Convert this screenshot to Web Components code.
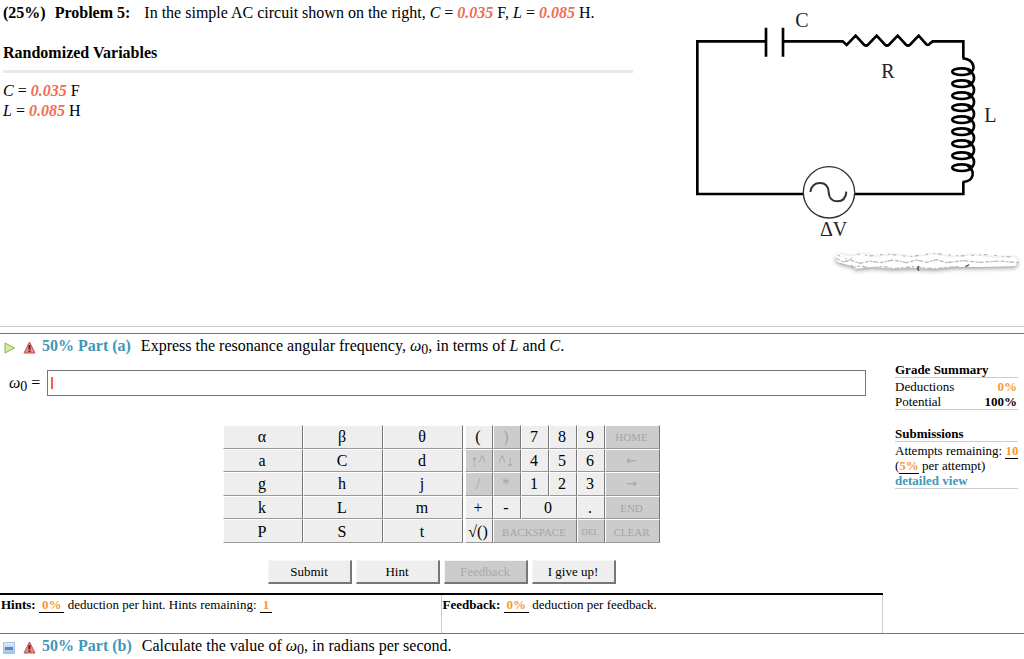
<!DOCTYPE html>
<html lang="en">
<head>
<meta charset="utf-8">
<title>Problem 5</title>
<style>
  body {
    margin: 0;
    background: #fff;
    color: #000;
    font: 16px/20px "Liberation Serif", "Times New Roman", serif;
    --link: #4197b8;
    --accent: #f79a32;
    --random: #f26b52;
    --rule: #ccc;
    --dark-rule: #777;
  }
  .value { color: var(--random); font-weight: 700; font-style: italic; }
  .question {
    display: grid;
    grid-template-columns: minmax(0, 1fr) 123px;
    column-gap: 12px;
    padding-right: 6px;
  }
  grade-summary { margin-top: 4px; }
</style>
</head>
<body>
<problem-statement>
  <span slot="weight">(25%)</span>
  <span slot="title">Problem 5:</span>
  <span slot="text">In the simple AC circuit shown on the right, <i>C</i> = <span class="value">0.035</span> F, <i>L</i> = <span class="value">0.085</span> H.</span>
  <div slot="variables"><i>C</i> = <span class="value">0.035</span> F</div>
  <div slot="variables"><i>L</i> = <span class="value">0.085</span> H</div>
  <circuit-diagram slot="figure"></circuit-diagram>
</problem-statement>

<part-heading state="open">
  <span slot="label">50% Part (a)</span>
  Express the resonance angular frequency, <omega-zero></omega-zero>, in terms of <i>L</i> and <i>C</i>.
</part-heading>

<div class="question">
  <answer-panel></answer-panel>
  <grade-summary></grade-summary>
</div>

<deduction-panel></deduction-panel>

<part-heading state="closed">
  <span slot="label">50% Part (b)</span>
  Calculate the value of <omega-zero></omega-zero>, in radians per second.
</part-heading>

<script>
class ProblemStatement extends HTMLElement {
  connectedCallback() {
    if (this.shadowRoot) return;
    this.attachShadow({ mode: "open" }).innerHTML = `
      <style>
        :host {
          display: grid;
          grid-template-columns: minmax(0, 1fr) 344px;
          padding-bottom: 46px;
          border-bottom: 1px solid var(--rule);
        }
        .text { padding: 3px 47px 0 3px; }
        p { margin: 0; white-space: nowrap; }
        b { margin-right: 5px; }
        b + b { margin-right: 10px; }
        h2 {
          margin: 20px 0 7px;
          font-size: 16px;
          line-height: 20px;
        }
        hr { height: 3px; margin: 0 0 8px; border: 0; background: #e8e8e8; }
      </style>
      <div class="text">
        <p><b><slot name="weight"></slot></b> <b><slot name="title"></slot></b> <slot name="text"></slot></p>
        <h2>Randomized Variables</h2>
        <hr>
        <slot name="variables"></slot>
      </div>
      <slot name="figure"></slot>
    `;
  }
}

class CircuitDiagram extends HTMLElement {
  connectedCallback() {
    if (this.shadowRoot) return;
    // nine loops of the inductor, one every 36 units
    let coil = "";
    for (let i = 0; i < 9; i++) {
      const y = 215 + i * 36;
      coil += `<ellipse cx="845" cy="${y}" rx="28" ry="10"/>`;
      if (i < 8) coil += `<path d="M862 ${y - 6}C887 ${y + 4} 889 ${y + 30} 866 ${y + 41}"/>`;
    }
    this.attachShadow({ mode: "open" }).innerHTML = `
      <style>
        :host { display: block; }
        svg { display: block; width: 100%; height: auto; }
        text { font-family: "Liberation Serif", serif; font-size: 60px; fill: #222; }
      </style>
      <svg viewBox="0 0 1032 840" role="img" aria-label="AC circuit">
        <g fill="none" stroke="#000" stroke-width="8">
          <path d="M258 124H52V582H370M525 582H850V545"/>
          <path d="M258 83V170M309 83V170"/>
          <path d="M309 124H488L500 135L527 107L552 134Q558 139 564 134L590 107L615 134Q621 139 627 134L653 107L678 134Q684 139 690 134L716 107L740 134Q746 137 750 130L758 124H850V175"/>
          ${coil}
          <path d="M848 175C884 178 890 212 866 221M862 497C888 512 882 544 848 546"/>
        </g>
        <g fill="none" stroke="#333" stroke-width="4">
          <circle cx="447" cy="577" r="77"/>
          <path stroke-width="6" d="M391 576C394 558 406 549 420 549C440 549 445 562 446 576C447 596 459 604 472 604C490 604 498 592 499 575"/>
        </g>
        <text x="346" y="81">C</text>
        <text x="604" y="234">R</text>
        <text x="913" y="365">L</text>
        <text x="420" y="708">ΔV</text>
        <g fill="none" stroke-linecap="round" stroke-linejoin="round">
          <g stroke="#fff" stroke-width="26" style="filter: drop-shadow(0 5px 7px #999)">
            <path d="M480 775L510 783L545 775L590 784L640 777L700 785L760 776L820 785L880 778L940 786L1000 784"/>
            <path d="M530 793L580 788L640 793L700 790L760 794L820 788L900 788L1000 786"/>
          </g>
          <path stroke="#aaa" stroke-width="3" stroke-dasharray="5 19 2 11 9 23" d="M475 766L510 780L525 762L570 768L620 762L690 770L760 760L840 768L920 764L1000 772"/>
          <path stroke="#bbb" stroke-width="4" stroke-dasharray="9 7 3 5 14 8" d="M470 776L490 786L510 780L540 790L570 783L600 788L640 780L680 788L710 780L740 787L770 779L800 788L850 782L900 787L960 783L1014 788"/>
          <path stroke="#bbb" stroke-width="4" stroke-dasharray="12 7 5 9" d="M515 803L540 798L570 804L610 799L640 806L700 800L760 806L840 799"/>
          <path stroke="#444" stroke-width="4" d="M716 800Q710 806 716 811M858 799L866 795"/>
        </g>
      </svg>
    `;
  }
}

class OmegaZero extends HTMLElement {
  connectedCallback() {
    if (this.shadowRoot) return;
    this.attachShadow({ mode: "open" }).innerHTML = `
      <style>
        :host { display: inline; white-space: nowrap; }
        sub { font-size: 14px; line-height: 0; vertical-align: -3px; }
      </style><i>ω</i><sub>0</sub>`;
  }
}

class PartHeading extends HTMLElement {
  connectedCallback() {
    if (this.shadowRoot) return;
    const open = `
      <svg width="12" height="12" viewBox="0 0 12 12" aria-hidden="true">
        <path d="M2 1L11.500 6L2 11Z" fill="#d5e9a5" stroke="#91b257" stroke-linejoin="round"/>
      </svg>`;
    const closed = `
      <svg width="12" height="12" viewBox="0 0 12 12" aria-hidden="true">
        <defs><linearGradient id="g" x2="0" y2="1"><stop stop-color="#e3edf8"/><stop offset="1" stop-color="#9dbde5"/></linearGradient></defs>
        <rect x=".5" y=".5" width="11" height="11" fill="url(#g)" stroke="#a9c3e3"/>
        <path d="M2 5H10V8H2Z" fill="#5687c6"/>
      </svg>`;
    this.attachShadow({ mode: "open" }).innerHTML = `
      <style>
        :host {
          display: flex;
          align-items: center;
          height: 24px;
          padding-left: 3px;
          border-top: 1px solid var(--dark-rule);
        }
        :host([state="open"]) { margin-top: 6px; }
        svg { display: block; flex: none; margin-top: 3px; }
        .warning { margin: 2px 6px 0 8px; }
        strong { margin-right: 10px; color: var(--link); white-space: nowrap; }
        p { margin: 0; }
      </style>
      ${this.getAttribute("state") === "open" ? open : closed}
      <svg class="warning" width="13" height="13" viewBox="0 0 13 13" aria-hidden="true">
        <path d="M6.500 1L12 12H1Z" fill="#e88a86" stroke="#c45353" stroke-linejoin="round"/>
        <path d="M6.500 4V8.500M6.500 9.500V11" stroke="#5e1c20" stroke-width="2"/>
      </svg>
      <strong><slot name="label"></slot></strong>
      <p><slot></slot></p>
    `;
  }
}

// "!" in front of a key marks it as disabled, the number is its column span
const letterKeys = ["α", "β", "θ", "a", "C", "d", "g", "h", "j", "k", "L", "m", "P", "S", "t"];
const mathKeys = [
  ["("], ["!)"], ["7"], ["8"], ["9"], ["!HOME"],
  ["!↑^"], ["!^↓"], ["4"], ["5"], ["6"], ["!←"],
  ["!/"], ["!*"], ["1"], ["2"], ["3"], ["!→"],
  ["+"], ["-"], ["0", 2], ["."], ["!END"],
  ["√()"], ["!BACKSPACE", 3], ["!DEL"], ["!CLEAR"]
];

class KeyPad extends HTMLElement {
  connectedCallback() {
    if (this.shadowRoot) return;
    this.attachShadow({ mode: "open" }).innerHTML = `
      <style>
        :host { display: flex; gap: 2px; }
        div { display: grid; grid-auto-rows: 1fr; height: 118px; }
        .letters { grid-template-columns: repeat(3, 80px); }
        .math { grid-template-columns: repeat(5, 28px) 55px; }
        button {
          min-width: 0;
          min-height: 0;
          padding: 1px 2px 0 0;
          border: 1px solid;
          border-color: #fff #777 #999 #fff;
          background: #eee;
          color: #000;
          font: 16px/20px "Liberation Serif", serif;
        }
        button:disabled { background: #ccc; color: #a5a5a5; }
        button.word { font-size: 11px; }
        button.tiny { font-size: 9px; }
        button.arrow { font: 13px/16px "DejaVu Sans", sans-serif; }
      </style>
      <div class="letters"></div>
      <div class="math"></div>
    `;
    const letters = this.shadowRoot.querySelector(".letters");
    const math = this.shadowRoot.querySelector(".math");
    letterKeys.forEach(key => letters.appendChild(this.makeKey(key)));
    mathKeys.forEach(([key, span]) => math.appendChild(this.makeKey(key, span)));
  }

  makeKey(key, span = 1) {
    const button = document.createElement("button");
    button.type = "button";
    button.disabled = key.startsWith("!");
    button.textContent = key.replace("!", "");
    if (/[A-Z]{3}/.test(key)) button.className = key === "!DEL" ? "tiny" : "word";
    if (/[←→]/.test(key)) button.className = "arrow";
    if (span > 1) button.style.gridColumn = "span " + span;
    return button;
  }
}

class ActionButton extends HTMLElement {
  connectedCallback() {
    if (this.shadowRoot) return;
    this.attachShadow({ mode: "open" }).innerHTML = `
      <style>
        :host { display: block; }
        button {
          width: 84px;
          height: 24px;
          padding: 0;
          border: 1px solid;
          border-width: 1px 2px 2px 1px;
          border-color: #f6f6f6 #777 #777 #f6f6f6;
          background: #eee;
          color: #000;
          font: 13px/16px "Liberation Serif", serif;
        }
        button:disabled { background: #ccc; color: #aaa; }
      </style>
      <button type="button"><slot></slot></button>
    `;
    this.shadowRoot.querySelector("button").disabled = this.hasAttribute("disabled");
  }
}

class AnswerPanel extends HTMLElement {
  connectedCallback() {
    if (this.shadowRoot) return;
    this.attachShadow({ mode: "open" }).innerHTML = `
      <style>
        :host { display: block; padding-top: 12px; }
        .answer { display: flex; align-items: center; gap: 7px; padding: 0 17px 0 9px; }
        label { white-space: nowrap; }
        input {
          flex: 1;
          min-width: 0;
          height: 26px;
          box-sizing: border-box;
          padding: 0 5px;
          border: 1px solid #777;
          border-radius: 0;
          outline: 0;
          background: linear-gradient(#f55, #f55) 3px 6px / 2px 12px no-repeat #fff;
          font: 16px/20px "Liberation Serif", serif;
        }
        key-pad { justify-content: center; margin-top: 29px; }
        .actions { display: flex; justify-content: center; gap: 4px; margin: 17px 0 9px; }
      </style>
      <div class="answer">
        <label for="answer"><omega-zero></omega-zero> =</label>
        <input id="answer" type="text" autocomplete="off">
      </div>
      <key-pad></key-pad>
      <div class="actions">
        <action-button>Submit</action-button>
        <action-button>Hint</action-button>
        <action-button disabled>Feedback</action-button>
        <action-button>I give up!</action-button>
      </div>
    `;
  }
}

class GradeSummary extends HTMLElement {
  connectedCallback() {
    if (this.shadowRoot) return;
    this.attachShadow({ mode: "open" }).innerHTML = `
      <style>
        :host { display: block; font-size: 13px; line-height: 15px; }
        h3 { margin: 0 0 1px; border-bottom: 1px solid var(--rule); font-size: 13px; line-height: 15px; }
        section { margin-bottom: 16px; border-bottom: 1px solid var(--rule); white-space: nowrap; }
        .row { display: flex; justify-content: space-between; padding-right: 1px; }
        .accent { color: var(--accent); }
        .line { border-bottom: 1px solid #000; }
        a { color: var(--link); font-weight: 700; text-decoration: none; }
      </style>
      <section>
        <h3>Grade Summary</h3>
        <div class="row"><span>Deductions</span><b class="accent">0%</b></div>
        <div class="row"><span>Potential</span><b>100%</b></div>
      </section>
      <section>
        <h3>Submissions</h3>
        <div>Attempts remaining: <b class="accent line">10</b></div>
        <div>(<b class="accent line">5%</b> per attempt)</div>
        <a href="#">detailed view</a>
      </section>
    `;
  }
}

class DeductionPanel extends HTMLElement {
  connectedCallback() {
    if (this.shadowRoot) return;
    this.attachShadow({ mode: "open" }).innerHTML = `
      <style>
        :host {
          display: grid;
          grid-template-columns: 1fr 1fr;
          margin-right: 141px;
          border-top: 2px solid #000;
          font-size: 13px;
          line-height: 16px;
        }
        div { min-height: 36px; padding: 2px 2px 0 1px; border-right: 1px solid var(--rule); }
        .accent {
          padding: 0 3px;
          border-bottom: 1px solid #000;
          color: var(--accent);
        }
      </style>
      <div><b>Hints:</b> <b class="accent">0%</b> deduction per hint. Hints remaining: <b class="accent">1</b></div>
      <div><b>Feedback:</b> <b class="accent">0%</b> deduction per feedback.</div>
    `;
  }
}

customElements.define("omega-zero", OmegaZero);
customElements.define("circuit-diagram", CircuitDiagram);
customElements.define("problem-statement", ProblemStatement);
customElements.define("part-heading", PartHeading);
customElements.define("key-pad", KeyPad);
customElements.define("action-button", ActionButton);
customElements.define("answer-panel", AnswerPanel);
customElements.define("grade-summary", GradeSummary);
customElements.define("deduction-panel", DeductionPanel);
</script>
</body>
</html>
